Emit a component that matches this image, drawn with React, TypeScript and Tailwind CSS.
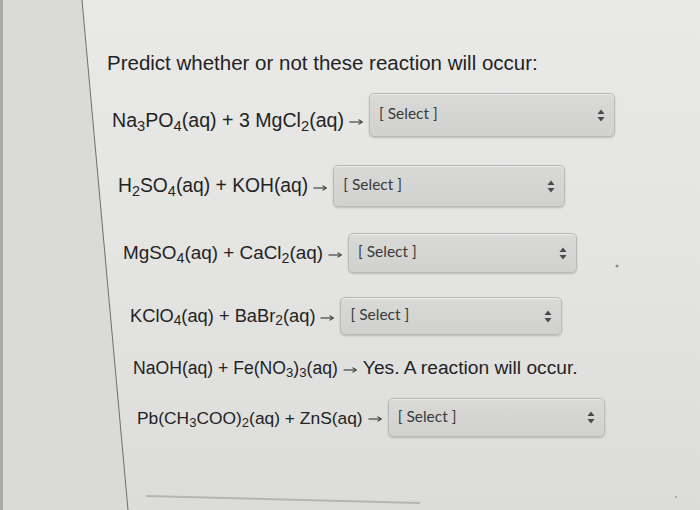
import React from 'react';

const Sub: React.FC<{ children: React.ReactNode }> = ({ children }) => <sub>{children}</sub>;

const Arrow = () => (
  <svg className="ml-[5px] mr-[6px] mt-[3px] shrink-0" width="14" height="8" viewBox="0 0 14 8">
    <line x1="0.5" y1="4" x2="12.5" y2="4" stroke="#333" strokeWidth="1.1" />
    <path d="M9.5 1.6 L13.5 4 L9.5 6.4" fill="none" stroke="#333" strokeWidth="1.1" />
  </svg>
);

const Updown = () => (
  <svg width="8" height="13" viewBox="0 0 8 13">
    <path d="M4 0.5 L7.5 5 L0.5 5 Z" fill="#4a4a4a" />
    <path d="M4 12.5 L7.5 8 L0.5 8 Z" fill="#4a4a4a" />
  </svg>
);

const Select: React.FC<{ size: string }> = ({ size }) => (
  <div
    className={`flex items-center justify-between rounded-[5px] border border-[#b9bab8] bg-gradient-to-b from-[#d9dad8] to-[#d1d2d0] pl-[9px] pr-[9px] shadow-[inset_0_1px_1px_rgba(255,255,255,0.5),0_1px_2px_rgba(0,0,0,0.18)] ${size}`}
  >
    <span className="-mt-[2px] font-['Lato',sans-serif] text-[15.5px] text-[#3a3a3a]">[ Select ]</span>
    <Updown />
  </div>
);

export default function App() {
  return (
    <div className="relative h-[510px] w-[700px] overflow-hidden bg-gradient-to-b from-[#e9eae8] via-[#e4e5e3] to-[#dcdddb] font-['Liberation_Sans',Arial,sans-serif] text-[#232323]">
      {/* photo backdrop: page edge and margin */}
      <svg className="pointer-events-none absolute inset-0" width="700" height="510" viewBox="0 0 700 510">
        <polygon points="0,0 82,0 128,510 0,510" fill="#dadbd9" />
        <rect x="0" y="0" width="3" height="510" fill="#a9aaa8" />
        <line x1="82" y1="0" x2="128" y2="510" stroke="#6e6f6d" strokeWidth="1" />
        <line x1="146" y1="496" x2="420" y2="503" stroke="#b5b6b4" strokeWidth="2" />
        <circle cx="617" cy="266" r="1.5" fill="#8a8b89" />
        <circle cx="676" cy="497" r="1" fill="#9a9b99" />
      </svg>

      <div className="relative flex flex-col pt-[50px]">
        <div className="ml-[107px] text-[20.5px] leading-[26px]">
          Predict whether or not these reaction will occur:
        </div>

        <div className="ml-[112px] mt-[17px] flex items-center">
          <div className="mt-[10px] flex items-center">
            <span className="text-[19.6px] leading-[26px]">
              Na<Sub>3</Sub>PO<Sub>4</Sub>(aq) + 3 MgCl<Sub>2</Sub>(aq)
            </span>
            <Arrow />
          </div>
          <Select size="h-[44px] w-[246px]" />
        </div>

        <div className="ml-[118px] mt-[28px] flex items-center">
          <span className="text-[19.3px] leading-[26px]">
            H<Sub>2</Sub>SO<Sub>4</Sub>(aq) + KOH(aq)
          </span>
          <Arrow />
          <Select size="h-[42px] w-[232px]" />
        </div>

        <div className="ml-[123px] mt-[26px] flex items-center">
          <span className="text-[18.9px] leading-[26px]">
            MgSO<Sub>4</Sub>(aq) + CaCl<Sub>2</Sub>(aq)
          </span>
          <Arrow />
          <Select size="h-[40px] w-[229px]" />
        </div>

        <div className="ml-[130px] mt-[24px] flex items-center">
          <span className="text-[18.3px] leading-[26px]">
            KClO<Sub>4</Sub>(aq) + BaBr<Sub>2</Sub>(aq)
          </span>
          <Arrow />
          <Select size="h-[38px] w-[222px]" />
        </div>

        <div className="ml-[133px] mt-[20px] flex items-center">
          <span className="text-[17.6px] leading-[26px]">
            NaOH(aq) + Fe(NO<Sub>3</Sub>)<Sub>3</Sub>(aq)
          </span>
          <Arrow />
          <span className="text-[19.2px] leading-[26px]">Yes. A reaction will occur.</span>
        </div>

        <div className="ml-[137px] mt-[17px] flex items-center">
          <span className="text-[17.4px] leading-[26px]">
            Pb(CH<Sub>3</Sub>COO)<Sub>2</Sub>(aq) + ZnS(aq)
          </span>
          <Arrow />
          <Select size="h-[39px] w-[217px]" />
        </div>
      </div>
    </div>
  );
}
